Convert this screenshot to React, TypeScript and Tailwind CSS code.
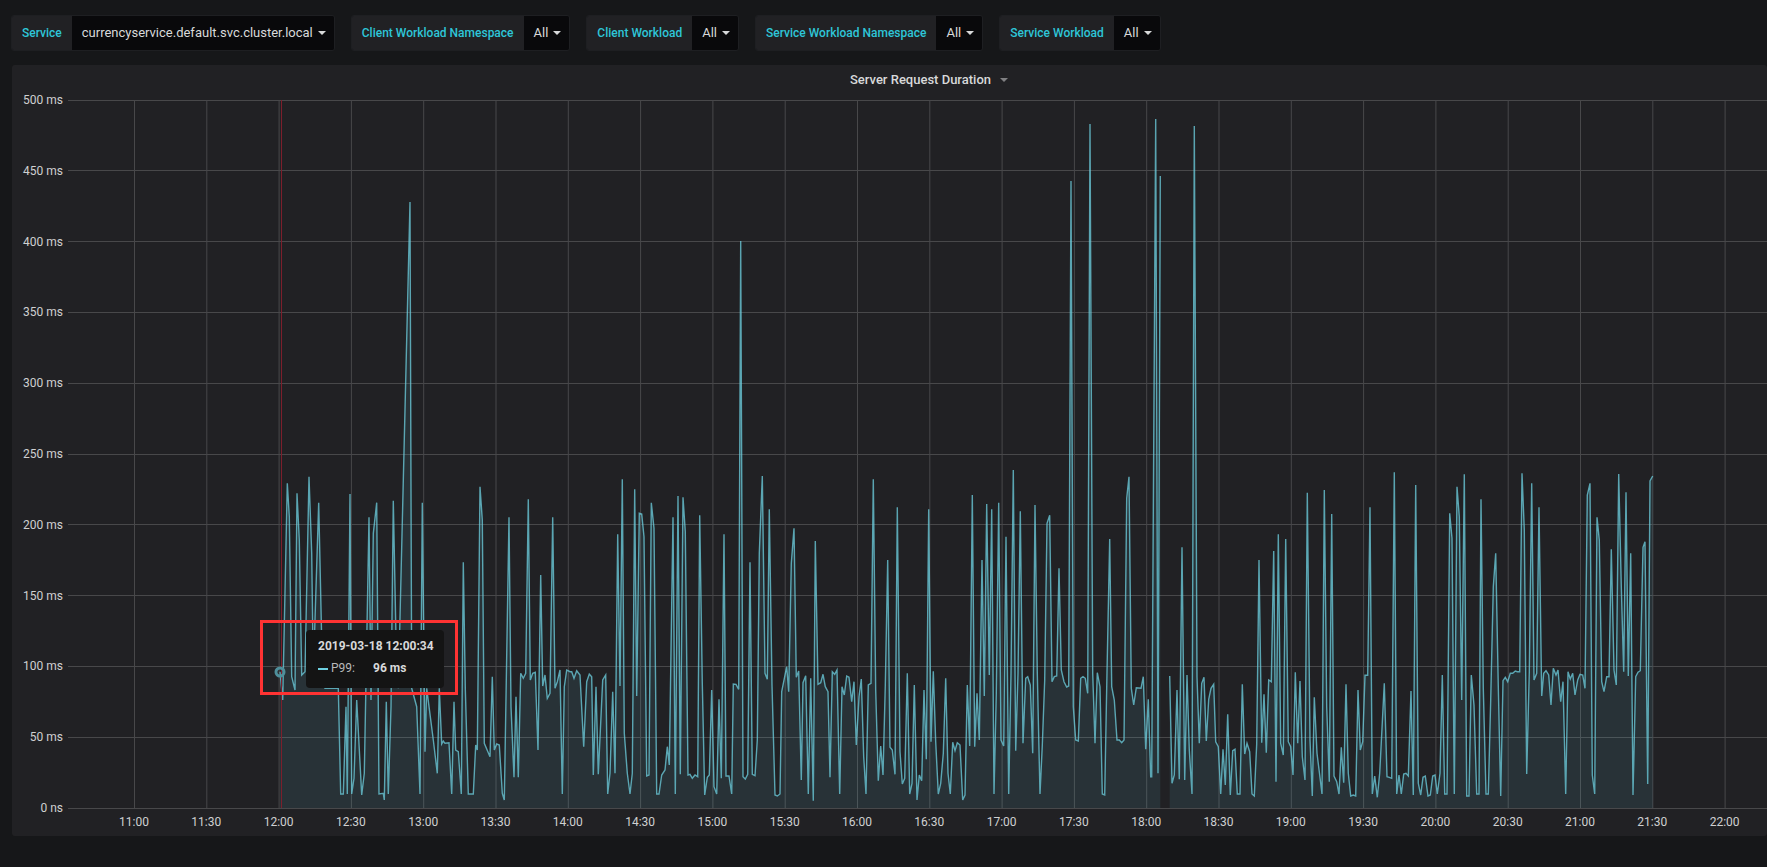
const FILTERS = [
  { label: 'Service', value: 'currencyservice.default.svc.cluster.local' },
  { label: 'Client Workload Namespace', value: 'All' },
  { label: 'Client Workload', value: 'All' },
  { label: 'Service Workload Namespace', value: 'All' },
  { label: 'Service Workload', value: 'All' },
];

const Y_TICKS = ['0 ns', '50 ms', '100 ms', '150 ms', '200 ms', '250 ms', '300 ms', '350 ms', '400 ms', '450 ms', '500 ms'];
const X_TICKS = [
  '11:00', '11:30', '12:00', '12:30', '13:00', '13:30', '14:00', '14:30', '15:00', '15:30', '16:00', '16:30',
  '17:00', '17:30', '18:00', '18:30', '19:00', '19:30', '20:00', '20:30', '21:00', '21:30', '22:00',
];

// series traced from the panel, [x, y] pairs per stretch, x is 3x from the offset and y 3x from 440
const STRETCH_A = [
  30, 695, 38, 780, 52, 130, 58, 230, 65, 710, 75, 750, 81, 160, 88, 300, 95, 705, 105, 695, 117, 110, 125, 340, 130, 700,
  146, 188, 155, 600, 165, 745, 205, 745, 212, 1062, 220, 1062, 228, 800, 232, 1062, 240, 162, 245, 1062, 252, 1015,
  260, 780, 275, 1065, 283, 1000, 297, 232, 303, 780, 310, 280, 320, 188, 327, 1062, 340, 1060, 343, 1080, 349, 785,
  355, 1062, 363, 800, 370, 182, 380, 700, 385, 745, 420, -714, 425, 745, 440, 800, 450, 1062, 457, 188, 465, 935,
  470, 745, 490, 900, 502, 1000, 508, 745, 515, 912, 520, 903, 525, 910, 537, 908, 545, 1062, 552, 785, 557, 930,
  565, 935, 574, 1062, 580, 367, 586, 745, 595, 1062, 610, 1062, 617, 915, 622, 930, 630, 140, 637, 240, 643, 910,
  660, 950, 667, 710, 673, 930, 680, 912, 688, 915, 697, 1060, 703, 1080, 717, 232, 723, 800, 732, 1012, 738, 770,
  745, 1012, 752, 700, 760, 715, 767, 700, 775, 178, 781, 720, 788, 700, 796, 697, 804, 930, 812, 405, 818, 738,
  825, 705, 832, 775, 840, 760, 848, 232, 855, 745, 862, 725, 870, 690, 877, 1062, 883, 740, 890, 690, 900, 695,
  905, 695, 912, 715, 920, 692, 930, 705, 941, 920, 950, 725, 958, 702, 965, 710, 970, 1005, 978, 740, 985, 1003,
  998, 720, 1007, 705, 1013, 1062, 1020, 1000, 1028, 755, 1035, 1000, 1043, 283, 1050, 738, 1057, 118, 1063, 880,
  1072, 1000, 1080, 1062, 1087, 1000, 1094, 148, 1100, 768, 1108, 220, 1115, 222, 1122, 290, 1130, 1008, 1137, 1005,
  1144, 188, 1152, 265, 1160, 1062, 1167, 1062, 1175, 1005, 1185, 990, 1192, 920, 1198, 975,
];
const STRETCH_B = [
  9, 232, 16, 1062, 24, 168, 31, 1003, 39, 172, 46, 275, 54, 1005, 60, 1003, 67, 1015, 75, 1005, 83, 1010, 89, 226,
  97, 730, 104, 1065, 112, 1012, 118, 1005, 125, 750, 132, 1040, 140, 1062, 147, 778, 154, 1015, 162, 283, 168, 1008,
  177, 1008, 185, 1062, 190, 732, 198, 733, 206, 748, 212, -597, 219, 1010, 226, 1017, 233, 1003, 240, 367, 247, 1003,
  255, 1007, 262, 900, 268, 340, 277, 108, 285, 700, 292, 718, 298, 208, 306, 735, 315, 1065, 322, 1068, 330, 1062,
  335, 755, 350, 680, 356, 755, 364, 370, 372, 265, 379, 712, 386, 693, 394, 1020, 399, 728, 407, 707, 415, 1062,
  422, 715, 430, 1082, 436, 303, 444, 733, 452, 728, 459, 703, 466, 740, 474, 755, 480, 1012, 487, 695, 494, 703,
  501, 690, 509, 1062, 516, 740, 523, 765, 530, 708, 537, 712, 545, 785, 552, 725, 559, 915, 567, 770, 574, 717,
  581, 950, 588, 1062, 595, 735, 603, 730, 610, 118, 617, 750, 625, 1022, 632, 918, 639, 1005, 646, 735, 653, 360,
  660, 922, 667, 930, 675, 1003, 682, 202, 690, 935, 697, 1032, 704, 1015, 712, 700, 719, 1062, 726, 1030, 733, 735,
  741, 1080, 748, 1005, 755, 1022, 762, 750, 769, 958, 776, 208, 783, 905, 790, 694, 797, 905, 805, 1062, 812, 1030,
  820, 940, 827, 715, 834, 1000, 841, 1062, 848, 907, 855, 932, 862, 908, 870, 915, 878, 1080, 885, 1065, 892, 735,
  899, 918, 907, 165, 914, 920, 921, 760, 928, 900, 936, 360, 943, 768, 950, 192, 958, 705, 965, 208, 972, 1062,
  979, 760, 986, 188, 993, 900, 1001, 918, 1008, 290, 1016, 1062, 1023, 700, 1030, 90, 1037, 932, 1044, 700, 1051, 214,
  1059, 910, 1067, 715, 1073, 710, 1081, 735, 1088, 940, 1095, 195, 1102, 700, 1110, 1062, 1117, 915, 1124, 720,
  1131, 250, 1139, 226, 1146, 725, 1153, 710, 1160, 708, 1167, 385, 1174, 690, 1182, 725, 1190, 741, 1196, 738,
];
const STRETCH_C = [
  3, -777, 10, 800, 17, 900, 25, 903, 32, 715, 39, 710, 46, 715, 53, 760, 60, -948, 68, 700, 75, 910, 82, 698, 90, 740,
  97, 1062, 104, 1065, 111, 695, 119, 297, 125, 740, 133, 780, 141, 900, 148, 900, 155, 908, 162, 900, 170, 175,
  177, 110, 184, 745, 191, 795, 199, 743, 213, 745, 220, 710, 227, 928, 235, 778, 242, 1010, 245, 1010, 257, -963,
  264, 1000, 271, -792,
];
const STRETCH_D = [
  299, 708, 306, 1030, 313, 1005, 321, 750, 328, 1018, 336, 322, 344, 1020, 351, 705, 358, 930, 366, 1062, 373, -942,
  381, 710, 388, 910, 395, 730, 402, 712, 409, 903, 416, 778, 423, 745, 431, 733, 437, 905, 445, 920, 452, 1062,
  459, 928, 466, 1035, 473, 823, 481, 1065, 488, 932, 495, 928, 502, 1062, 510, 1062, 517, 733, 524, 942, 531, 910,
  539, 935, 546, 1062, 553, 1068, 560, 912, 567, 360, 575, 908, 582, 763, 589, 938, 596, 720, 604, 725, 611, 333,
  618, 1025, 625, 283, 632, 910, 640, 945, 647, 297, 655, 905, 662, 920, 669, 1005, 676, 697, 683, 910, 690, 723,
  697, 950, 705, 1020, 712, 158, 720, 900, 727, 1068, 733, 772, 741, 940, 749, 1005, 756, 1062, 763, 150, 770, 800,
  778, 1025, 785, 222, 792, 1008, 800, 1025, 807, 1062, 814, 922, 821, 1028, 828, 733, 835, 1000, 842, 1068, 850, 1065,
  857, 1068, 864, 750, 871, 930, 878, 905, 885, 706, 893, 706, 900, 202, 907, 1062, 914, 1008, 922, 1072, 929, 1000,
  943, 730, 951, 1010, 958, 1012, 965, 1015, 973, 97, 980, 1062, 987, 1005, 994, 1062, 1001, 1002, 1008, 1000,
  1015, 1008, 1023, 753, 1030, 1065, 1037, 135, 1045, 1030, 1052, 1065, 1059, 1012, 1066, 1008, 1074, 1068, 1081, 1065,
  1088, 1008, 1095, 1005, 1102, 1062, 1110, 1000, 1117, 705, 1124, 1062, 1131, 1062, 1139, 220, 1146, 295, 1153, 1062,
  1161, 140, 1168, 230, 1175, 780, 1183, 103,
];
const STRETCH_E = [
  200, 1068, 207, 1068, 214, 705, 222, 795, 230, 1062, 237, 1062, 243, 178, 250, 745, 258, 1062, 265, 1062, 272, 780,
  280, 440, 287, 340, 295, 740, 302, 1068, 309, 722, 316, 712, 323, 725, 331, 700, 338, 700, 346, 693, 352, 695,
  359, 695, 366, 100, 373, 270, 380, 1002, 388, 695, 395, 130, 402, 720, 410, 700, 417, 202, 425, 768, 431, 700,
  438, 692, 446, 705, 453, 795, 460, 685, 468, 705, 474, 690, 482, 785, 489, 725, 497, 1062, 504, 695, 511, 717,
  518, 700, 525, 765, 533, 720, 540, 703, 548, 705, 555, 745, 562, 165, 570, 130, 577, 1005, 584, 1062, 591, 232,
  598, 300, 605, 725, 612, 755, 620, 710, 627, 710, 634, 328, 642, 690, 649, 735, 656, 102, 664, 440, 671, 695,
  678, 157, 685, 708, 692, 340, 699, 1065, 707, 710, 714, 697, 721, 692, 729, 322, 735, 305, 743, 1032, 750, 123, 758, 108,
];

function toPoints(flat: number[], offset: number) {
  const out: [number, number][] = [];
  for (let i = 0; i < flat.length; i += 2) {
    out.push([offset + flat[i] / 3, 440 + flat[i + 1] / 3]);
  }
  return out;
}

const LEFT_PART = [...toPoints(STRETCH_A, 270), ...toPoints(STRETCH_B, 670), ...toPoints(STRETCH_C, 1070)];
const RIGHT_PART = [...toPoints(STRETCH_D, 1070), ...toPoints(STRETCH_E, 1400)];

function linePath(points: [number, number][]) {
  return points.map(([x, y], i) => `${i ? 'L' : 'M'}${x.toFixed(1)} ${y.toFixed(1)}`).join('');
}

function areaPath(points: [number, number][]) {
  const first = points[0][0].toFixed(1);
  const last = points[points.length - 1][0].toFixed(1);
  return `${linePath(points)}L${last} 808L${first} 808Z`;
}

function Caret({ className }: { className: string }) {
  return <span className={`inline-block w-0 h-0 border-x-[4px] border-x-transparent border-t-[4px] ${className}`} />;
}

function Filter({ label, value }: { label: string; value: string }) {
  return (
    <div className="flex h-[36px] rounded-[3px] overflow-hidden border border-[#1e1f22]">
      <div className="flex items-center px-[10px] bg-[#212124] font-medium text-[12px] whitespace-nowrap">
        <span className="text-[#2ec6d8]">{label}</span>
      </div>
      <div className="flex items-center gap-[5px] pl-[10px] pr-[8px] bg-[#09090b] text-[#d8d9da] text-[13px] whitespace-nowrap">
        {value}
        <Caret className="border-t-[#d8d9da]" />
      </div>
    </div>
  );
}

function Chart() {
  return (
    <svg viewBox="12 90 1755 746" className="block w-[1755px] h-[746px]">
      {Y_TICKS.map((tick, i) => {
        const y = 808 - 70.8 * i;
        const lineY = Math.floor(y) + 0.5;
        return (
          <g key={tick}>
            <line x1={68} x2={1767} y1={lineY} y2={lineY} stroke="#48484a" strokeWidth={1} />
            <text x={63} y={y + 4} textAnchor="end" fontSize={12} fill="#cfd0d1">
              {tick}
            </text>
          </g>
        );
      })}
      {X_TICKS.map((tick, i) => {
        const x = 134.5 + 72.3 * i;
        return (
          <g key={tick}>
            <line x1={x} x2={x} y1={100} y2={808} stroke="#48484a" strokeWidth={1} />
            <text x={x - 0.5} y={826} textAnchor="middle" fontSize={12} fill="#cfd0d1">
              {tick}
            </text>
          </g>
        );
      })}
      <path d={areaPath(LEFT_PART)} fill="#6ed0e0" fillOpacity={0.1} />
      <path d={areaPath(RIGHT_PART)} fill="#6ed0e0" fillOpacity={0.1} />
      <path d={linePath(LEFT_PART)} fill="none" stroke="#6ed0e0" strokeOpacity={0.75} strokeWidth={1.4} />
      <path d={linePath(RIGHT_PART)} fill="none" stroke="#6ed0e0" strokeOpacity={0.75} strokeWidth={1.4} />
      <line x1={281.5} x2={281.5} y1={100} y2={808} stroke="#7c1f2c" strokeWidth={1} />
      <circle cx={280} cy={672} r={4} fill="none" stroke="#4f8f9b" strokeWidth={3} />
    </svg>
  );
}

export default function App() {
  return (
    <div className="h-[867px] overflow-hidden bg-[#161719] font-[Roboto,sans-serif] text-[#d8d9da]">
      <div className="flex gap-[16px] pt-[15px] pl-[11px]">
        {FILTERS.map((filter) => (
          <Filter key={filter.label} label={filter.label} value={filter.value} />
        ))}
      </div>
      <div className="mt-[14px] ml-[12px] h-[771px] rounded-[3px] bg-[#212124]">
        <div className="flex items-center gap-[9px] h-[25px] pl-[838px] pt-[4px] text-[13px] font-medium text-[#d8d9da]">
          Server Request Duration
          <Caret className="border-t-[#808082]" />
        </div>
        <div className="relative">
          <Chart />
          <div className="absolute left-[248px] top-[530px] w-[198px] h-[75px] border-[3px] border-[#ff3333]" />
          <div className="absolute left-[294px] top-[540px] w-[138px] h-[58px] rounded-[4px] bg-[#141414] pt-[9px] px-[12px] text-[12px] whitespace-nowrap">
            <div className="font-bold text-center text-[#d8d9da] leading-[15px]">2019-03-18 12:00:34</div>
            <div className="flex items-center mt-[7px] leading-[15px]">
              <span className="w-[10px] h-[2px] mr-[3px] bg-[#6ed0e0]" />
              <span className="w-[42px] text-[#b8b9ba]">P99:</span>
              <span className="font-bold text-[#d8d9da]">96 ms</span>
            </div>
          </div>
        </div>
      </div>
    </div>
  );
}
